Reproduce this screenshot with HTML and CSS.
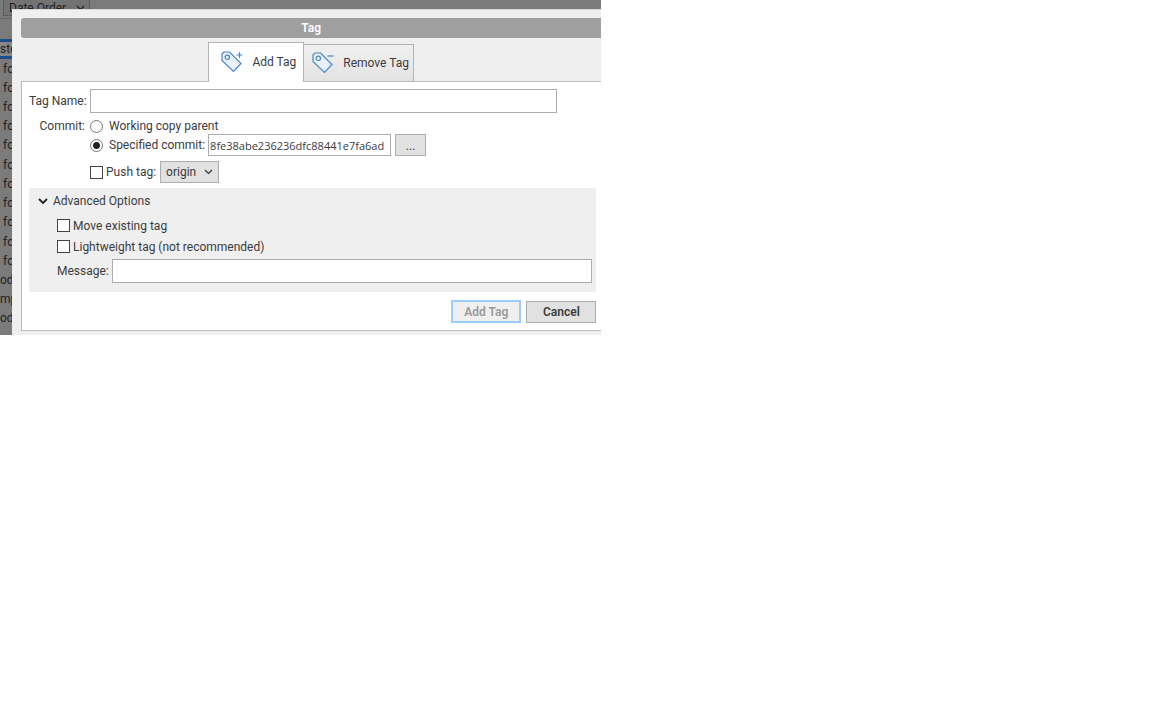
FILE: index.html
```html
<!DOCTYPE html>
<html lang="en">
<head>
    <meta charset="UTF-8">
    <meta name="viewport" content="width=device-width, initial-scale=1.0">
    <title>Tag</title>
    <link rel="stylesheet" href="styles.css">
</head>
<body>
    <div class="workspace">
        <div class="log">
            <div class="log-toolbar">
                <button type="button" class="order">Date Order
                    <svg width="9" height="6" viewBox="0 0 9 6"><path d="M1 1l3.5 3.5L8 1" fill="none" stroke="#222" stroke-width="1.3"/></svg>
                </button>
            </div>
            <div class="log-head"></div>
            <div class="log-current">ste</div>
            <ul class="log-rows">
                <li>for</li>
                <li>for</li>
                <li>for</li>
                <li>for</li>
                <li>for</li>
                <li>for</li>
                <li>for</li>
                <li>for</li>
                <li>for</li>
                <li>for</li>
                <li>for</li>
                <li class="flush">od</li>
                <li class="flush">mp</li>
                <li class="flush">od</li>
            </ul>
        </div>
        <div class="dialog" role="dialog" aria-labelledby="dialog-title">
            <h1 id="dialog-title">Tag</h1>
            <div class="tabs" role="tablist">
                <button type="button" class="tab active" role="tab" aria-selected="true">
                    <svg width="22" height="22" viewBox="0 0 22 22" fill="none" stroke="#4a86c5" stroke-width="1.2">
                        <path d="M1 3L3 1H8.5L20 12.5L12.5 20.5L1 9.5Z" fill="#e9f1fb"/>
                        <circle cx="6.3" cy="6.3" r="2.2"/>
                        <path d="M15.5 4h6M18.5 1v6"/>
                    </svg>
                    Add Tag
                </button>
                <button type="button" class="tab" role="tab" aria-selected="false">
                    <svg width="22" height="22" viewBox="0 0 22 22" fill="none" stroke="#4a86c5" stroke-width="1.2">
                        <path d="M1 3L3 1H8.5L20 12.5L12.5 20.5L1 9.5Z" fill="#e9f1fb"/>
                        <circle cx="6.3" cy="6.3" r="2.2"/>
                        <path d="M15.5 4h6"/>
                    </svg>
                    Remove Tag
                </button>
            </div>
            <form class="panel">
                <div class="fields">
                    <label class="name" for="tag-name">Tag Name:</label>
                    <input type="text" id="tag-name" class="tag-name">
                    <span class="name" id="commit-label">Commit:</span>
                    <div class="commit" role="radiogroup" aria-labelledby="commit-label">
                        <div class="line parent">
                            <input type="radio" name="commit" id="parent">
                            <label for="parent">Working copy parent</label>
                        </div>
                        <div class="line">
                            <input type="radio" name="commit" id="specified" checked>
                            <label for="specified">Specified commit:</label>
                            <input type="text" class="hash" aria-label="Commit hash" value="8fe38abe236236dfc88441e7fa6ad">
                            <button type="button" class="browse">...</button>
                        </div>
                    </div>
                    <div class="line push">
                        <input type="checkbox" id="push">
                        <label for="push">Push tag:</label>
                        <select aria-label="Remote">
                            <option>origin</option>
                        </select>
                    </div>
                </div>
                <div class="advanced">
                    <button type="button" class="expander" aria-expanded="true">
                        <svg width="10" height="7" viewBox="0 0 10 7"><path d="M1 1l4 4l4-4" fill="none" stroke="#222" stroke-width="1.8"/></svg>
                        Advanced Options
                    </button>
                    <div class="line option">
                        <input type="checkbox" id="move">
                        <label for="move">Move existing tag</label>
                    </div>
                    <div class="line option">
                        <input type="checkbox" id="light">
                        <label for="light">Lightweight tag (not recommended)</label>
                    </div>
                    <div class="line message">
                        <label for="message">Message:</label>
                        <input type="text" id="message">
                    </div>
                </div>
                <div class="actions">
                    <button type="submit" class="add" disabled>Add Tag</button>
                    <button type="button" class="cancel">Cancel</button>
                </div>
            </form>
        </div>
    </div>
</body>
</html>
```
FILE: styles.css
```css
* {
    box-sizing: border-box;
}
body {
    margin: 0;
    background: #fff;
    color: #3c3c3c;
    font-family: Roboto, "Open Sans", sans-serif;
    font-size: 12px;
    line-height: 16px;
}
button, input, select {
    margin: 0;
    font: inherit;
    color: inherit;
}
svg {
    flex: none;
}
.workspace {
    position: relative;
    width: 52.2%;
    overflow: hidden;
    background: #7b7b7b;
}

/* dimmed log behind the dialog */
.log {
    position: absolute;
    inset: 0;
    display: flex;
    flex-direction: column;
    color: #222;
}
.log-toolbar {
    height: 19px;
    padding-left: 3px;
    border-bottom: 1px solid #686868;
}
.order {
    display: flex;
    align-items: center;
    gap: 10px;
    width: 87px;
    height: 16px;
    padding: 0 5px;
    border: 1px solid #5c5c5c;
    border-top: 0;
    background: #737373;
    white-space: nowrap;
}
.log-head {
    height: 20px;
}
.log-current {
    height: 20px;
    border: solid #1d4e89;
    border-width: 3px 0;
    line-height: 14px;
    background: #858585;
}
.log-rows {
    flex: 1;
    display: flex;
    flex-direction: column;
    margin: 0;
    padding: 0 0 7px;
    list-style: none;
}
.log-rows li {
    flex: 1;
    display: flex;
    align-items: center;
    padding-left: 3px;
}
.log-rows .flush {
    padding-left: 0;
}

.dialog {
    position: relative;
    margin: 9px 0 0 12px;
    padding: 8px 0 4px 9px;
    border-top: 1px solid #d8d8d8;
    background: #efefef;
}
h1 {
    margin: 0;
    border-radius: 3px 0 0 3px;
    background: #a0a0a0;
    color: #fff;
    font-size: 12px;
    font-weight: 600;
    line-height: 20px;
    text-align: center;
}
.tabs {
    display: flex;
    justify-content: center;
    align-items: flex-end;
    padding-top: 4px;
}
.tab {
    display: flex;
    align-items: center;
    gap: 9px;
    height: 37px;
    padding: 0 4px 0 8px;
    border: 1px solid #b4b4b4;
    border-width: 1px 1px 0 0;
    background: linear-gradient(#f0f0f0, #e3e3e3);
}
.tab.active {
    position: relative;
    height: 40px;
    margin-bottom: -1px;
    padding: 0 7px 2px 12px;
    border-width: 1px 1px 0 1px;
    background: #fff;
}

.panel {
    padding: 7px 5px 7px 7px;
    border: 1px solid #bcbcbc;
    border-right: 0;
    background: #fff;
}
.fields {
    display: grid;
    grid-template-columns: 56px 1fr;
    column-gap: 5px;
}
.name {
    text-align: right;
    white-space: nowrap;
}
label.name {
    line-height: 24px;
}
span.name {
    padding-top: 5px;
}
.line {
    display: flex;
    align-items: center;
}
input[type="text"] {
    min-width: 0;
    height: 24px;
    padding: 0 1px;
    border: 1px solid #abadb3;
    background: #fff;
}
.tag-name {
    margin-right: 39px;
}
input[type="radio"] {
    appearance: none;
    width: 13px;
    height: 13px;
    margin-right: 6px;
    border: 1px solid #777;
    border-radius: 50%;
    background: #fff;
}
input[type="radio"]:checked {
    background: radial-gradient(circle, #222 3px, #fff 4px);
}
input[type="checkbox"] {
    appearance: none;
    width: 13px;
    height: 13px;
    margin-right: 3px;
    border: 1px solid #444;
    background: #fff;
}
.commit {
    padding-top: 5px;
}
.parent {
    height: 16px;
}
input[type="text"].hash {
    width: 183px;
    height: 22px;
    margin: 0 4px 0 3px;
    font-family: "Open Sans", sans-serif;
    font-size: 11px;
}
.browse {
    width: 31px;
    height: 22px;
    padding: 2px 0 0;
    border: 1px solid #adadad;
    background: #e1e1e1;
}
.push {
    grid-column: 2;
    padding-top: 5px;
}
select {
    appearance: none;
    width: 59px;
    height: 22px;
    margin-left: 4px;
    padding: 0 5px;
    border: 1px solid #adadad;
    border-radius: 0;
    background: #e1e1e1 url("data:image/svg+xml,%3Csvg xmlns='http://www.w3.org/2000/svg' width='9' height='6'%3E%3Cpath d='M1 1l3.5 3.5L8 1' fill='none' stroke='%23333' stroke-width='1.2'/%3E%3C/svg%3E") no-repeat right 5px center;
}

.advanced {
    margin-top: 5px;
    padding: 5px 4px 9px 28px;
    background: #efefef;
}
.expander {
    display: flex;
    align-items: center;
    gap: 5px;
    margin-left: -19px;
    padding: 0;
    border: 0;
    background: none;
}
.option {
    height: 21px;
}
.expander + .option {
    margin-top: 6px;
}
.message {
    gap: 3px;
    margin-top: 2px;
}
#message {
    flex: 1;
}
.actions {
    display: flex;
    justify-content: flex-end;
    align-items: flex-end;
    gap: 5px;
    padding-top: 8px;
}
.add, .cancel {
    width: 70px;
    height: 22px;
    padding: 0;
    border: 1px solid #adadad;
    background: #e1e1e1;
    font-weight: 600;
}
.add {
    height: 23px;
    border: 2px solid #99ccff;
    background: #efefef;
    color: #999;
}
```
